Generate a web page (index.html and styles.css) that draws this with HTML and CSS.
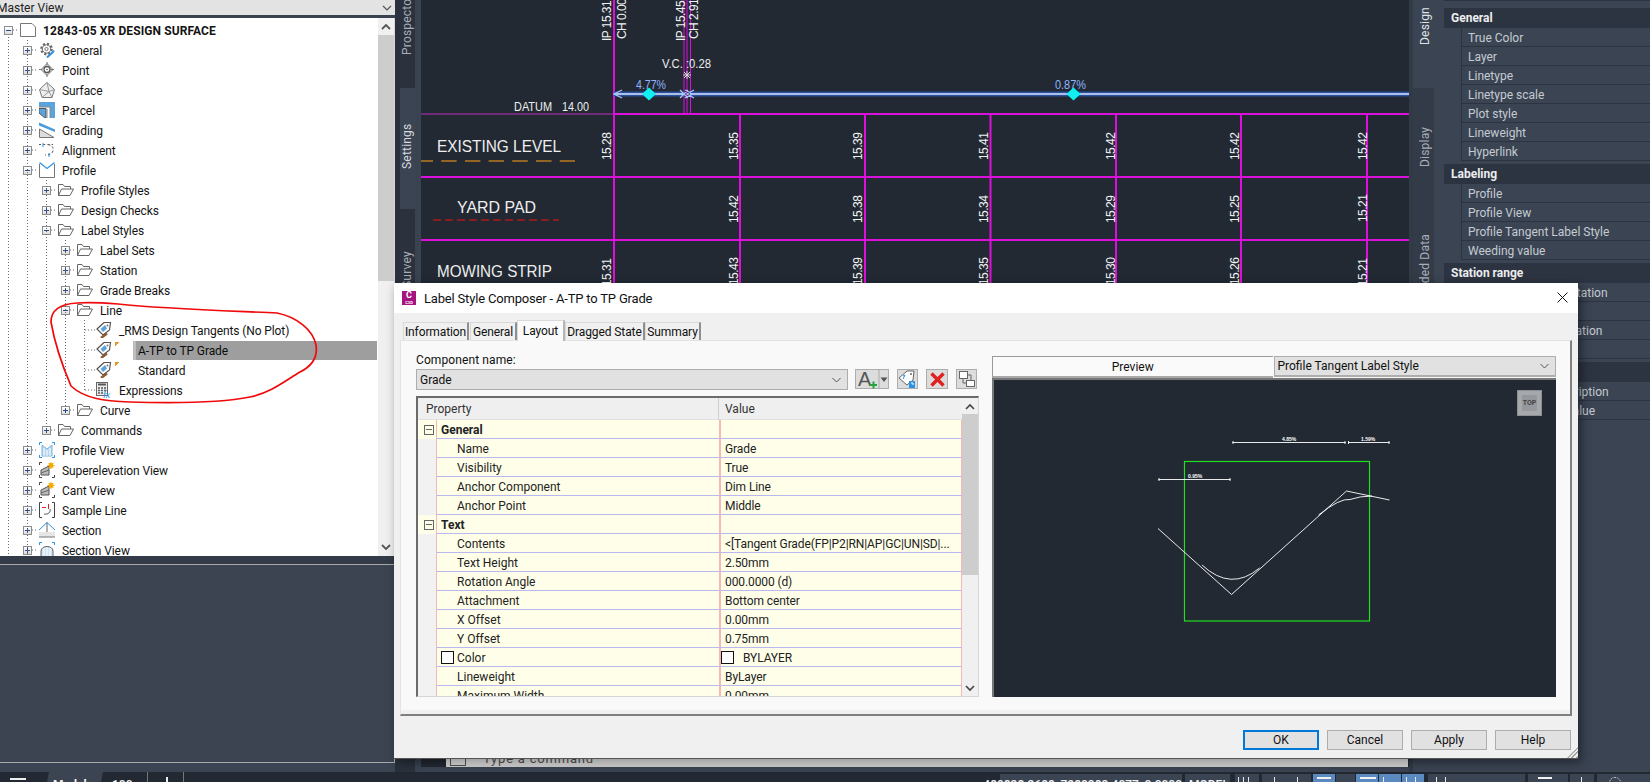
FILE: index.html
```html
<!DOCTYPE html>
<html lang="en">
<head>
<meta charset="utf-8">
<title>Label Style Composer - A-TP to TP Grade</title>
<link rel="stylesheet" href="styles.css">
</head>
<body>
<svg class="defs" width="0" height="0" aria-hidden="true">
  <symbol id="i-doc" viewBox="0 0 16 16"><path d="M.5 1.5H12L15.5 5V14.5H.5Z" fill="#fff" stroke="#777"/></symbol>
  <symbol id="i-gear" viewBox="0 0 16 16"><circle cx="7.5" cy="7" r="5" fill="none" stroke="#666" stroke-width="2.6" stroke-dasharray="2 1.9"/><circle cx="7.5" cy="7" r="4.2" fill="none" stroke="#777"/><circle cx="7.5" cy="7" r="1.6" fill="none" stroke="#777"/><path d="M8 15.5L14.5 9.5M15 8.5L13 11" stroke="#2a93e8" stroke-width="2" fill="none"/></symbol>
  <symbol id="i-point" viewBox="0 0 16 16"><path d="M8 0V3.5M8 11.5V15M0 7.5H3.5M11.5 7.5H15M8 1.5L14 7.5L8 13.5L2 7.5Z" fill="none" stroke="#777"/><circle cx="8" cy="7.5" r="3" fill="#fff" stroke="#555" stroke-width="1.3"/><circle cx="8" cy="7.5" r=".8" fill="#555"/></symbol>
  <symbol id="i-surface" viewBox="0 0 16 16"><path d="M8 .5L15.5 7.5L13 15.5H3L.5 7.5Z" fill="#eee" stroke="#777"/><path d="M.5 7.5L10 9.5L8 .5M10 9.5L13 15.5M10 9.5L3 15.5M10 9.5L15.5 7.5" fill="none" stroke="#999"/></symbol>
  <symbol id="i-parcel" viewBox="0 0 16 16"><path d="M0 0H16V16H11V5H0Z" fill="#5aa3dd"/><path d="M0 6.5H7V16H6L0 11Z" fill="#5aa3dd" stroke="#555"/><path d="M8 16V7M0 5H11V16" fill="none" stroke="#888"/></symbol>
  <symbol id="i-grading" viewBox="0 0 16 16"><path d="M.5 15.5V7L15 15.5Z" fill="#ddd" stroke="#777"/><path d="M0 .5L16 7.5V10L0 3.5Z" fill="#4a9ade"/></symbol>
  <symbol id="i-align" viewBox="0 0 16 16"><path d="M0 2.5H14" stroke="#555" fill="none" stroke-dasharray="2 2.2"/><path d="M9 2.5C13 3 15 6 14 9S10 13 6 13" stroke="#555" fill="none" stroke-dasharray="2.5 2"/><path d="M4 1V5M10 11V15" stroke="#2a93e8"/></symbol>
  <symbol id="i-profile" viewBox="0 0 16 16"><path d="M.5 2V15.5H15.5V2" fill="none" stroke="#777"/><path d="M.5 .5L8 6.5L15.5 .5" fill="none" stroke="#2a93e8" stroke-width="1.2"/></symbol>
  <symbol id="i-folder" viewBox="0 0 16 16"><path d="M.5 13.5V2.5H5L6.5 4.5H12.5V7" fill="#fff" stroke="#666"/><path d="M.5 13.5H12L15.5 7H3.5Z" fill="#fff" stroke="#666"/></symbol>
  <symbol id="i-tag" viewBox="0 0 16 16"><path d="M1 7L8 .5H14.5L13.5 8L7 13Z" fill="#fff" stroke="#555" stroke-width="1.2"/><circle cx="11.5" cy="3.5" r="1" fill="#777"/><path d="M4.5 7L9 3L11 6.5L7 10Z" fill="#5aa3dd"/><path d="M5 16L11 11.5" stroke="#8a5a2b" stroke-width="2.4"/></symbol>
  <symbol id="i-calc" viewBox="0 0 16 16"><rect x=".5" y=".5" width="11" height="13" fill="#eee" stroke="#666"/><path d="M2 2.5H10" stroke="#555" stroke-width="2"/><path d="M2 6H10M2 8.5H10M2 11H8" stroke="#555" stroke-width="1.4" stroke-dasharray="2 1"/><text x="7" y="16" class="fx">fx</text></symbol>
  <symbol id="i-pview" viewBox="0 0 16 16"><path d="M.5 3V.5H3M13 .5H15.5V3M.5 13V15.5H3M13 15.5H15.5V13" fill="none" stroke="#2a93e8"/><path d="M3 3L8 7L13 3V14H3Z" fill="#b9d8ef" stroke="#7fb4dc"/><path d="M5 6V14M8 8V14M11 6V14" stroke="#fff"/></symbol>
  <symbol id="i-super" viewBox="0 0 16 16"><path d="M.5 3V.5H3M.5 13V15.5H3M13 15.5H15.5V13" fill="none" stroke="#444"/><path d="M2 8L10 4V13H2Z" fill="#bbb" stroke="#555"/><path d="M2 11L10 8" stroke="#666"/><circle cx="12" cy="3.5" r="2.4" fill="#f5a800"/><path d="M12 0V7M8.5 3.5H15.5M9.5 1L14.5 6M14.5 1L9.5 6" stroke="#f5a800"/></symbol>
  <symbol id="i-sample" viewBox="0 0 16 16"><path d="M3 .5H.5V15.5H3M13 .5H15.5V15.5H13" fill="none" stroke="#444"/><path d="M3 5.5H7M9.5 2V7" stroke="#d22" fill="none"/><path d="M5 12C9 13 12 10 11 7" fill="none" stroke="#555"/></symbol>
  <symbol id="i-section" viewBox="0 0 16 16"><path d="M0 8L8 .5L16 8" fill="none" stroke="#2a93e8"/><path d="M8 .5V14" stroke="#666"/><path d="M0 10H16V15H0Z" fill="#e6e6e6"/><path d="M0 15H16" stroke="#777"/></symbol>
  <symbol id="i-sview" viewBox="0 0 16 16"><path d="M.5 3V.5H3M13 .5H15.5V3M.5 15.5H1.5M14.5 15.5H15.5" fill="none" stroke="#2a93e8"/><path d="M2 15V9C2 3 14 3 14 9V15Z" fill="#cfe3f2"/><path d="M2 15V9C2 3 14 3 14 9V15" fill="none" stroke="#666"/><path d="M5 6V15M8 5V15M11 6V15" stroke="#fff"/></symbol>
</svg>

<div class="app">
  <div class="main">
    <aside class="left">
      <div class="master"><span class="master-t">Master View</span>
        <svg class="chev" width="10" height="6" viewBox="0 0 10 6"><path d="M1 1L5 5L9 1" fill="none" stroke="#555" stroke-width="1.2"/></svg>
      </div>
      <div class="tree-wrap">
        <div class="tree">
          <div class="row l0"><span class="box minus"></span><svg class="ic"><use href="#i-doc"/></svg><span class="t root">12843-05 XR DESIGN SURFACE</span></div>
          <div class="row l1"><span class="box plus"></span><svg class="ic"><use href="#i-gear"/></svg><span class="t">General</span></div>
          <div class="row l1"><span class="box plus"></span><svg class="ic"><use href="#i-point"/></svg><span class="t">Point</span></div>
          <div class="row l1"><span class="box plus"></span><svg class="ic"><use href="#i-surface"/></svg><span class="t">Surface</span></div>
          <div class="row l1"><span class="box plus"></span><svg class="ic"><use href="#i-parcel"/></svg><span class="t">Parcel</span></div>
          <div class="row l1"><span class="box plus"></span><svg class="ic"><use href="#i-grading"/></svg><span class="t">Grading</span></div>
          <div class="row l1"><span class="box plus"></span><svg class="ic"><use href="#i-align"/></svg><span class="t">Alignment</span></div>
          <div class="row l1"><span class="box minus"></span><svg class="ic"><use href="#i-profile"/></svg><span class="t">Profile</span></div>
          <div class="row l2"><span class="box plus"></span><svg class="ic"><use href="#i-folder"/></svg><span class="t">Profile Styles</span></div>
          <div class="row l2"><span class="box plus"></span><svg class="ic"><use href="#i-folder"/></svg><span class="t">Design Checks</span></div>
          <div class="row l2"><span class="box minus"></span><svg class="ic"><use href="#i-folder"/></svg><span class="t">Label Styles</span></div>
          <div class="row l3"><span class="box plus"></span><svg class="ic"><use href="#i-folder"/></svg><span class="t">Label Sets</span></div>
          <div class="row l3"><span class="box plus"></span><svg class="ic"><use href="#i-folder"/></svg><span class="t">Station</span></div>
          <div class="row l3"><span class="box plus"></span><svg class="ic"><use href="#i-folder"/></svg><span class="t">Grade Breaks</span></div>
          <div class="row l3"><span class="box minus"></span><svg class="ic"><use href="#i-folder"/></svg><span class="t">Line</span></div>
          <div class="row l4"><span class="box none"></span><svg class="ic"><use href="#i-tag"/></svg><span class="t">_RMS Design Tangents (No Plot)</span></div>
          <div class="row l4"><span class="box none"></span><svg class="ic"><use href="#i-tag"/></svg><span class="mark"></span><span class="t sel">A-TP to TP Grade</span></div>
          <div class="row l4"><span class="box none"></span><svg class="ic"><use href="#i-tag"/></svg><span class="mark"></span><span class="t unsel">Standard</span></div>
          <div class="row l4"><span class="box none"></span><svg class="ic"><use href="#i-calc"/></svg><span class="t">Expressions</span></div>
          <div class="row l3"><span class="box plus"></span><svg class="ic"><use href="#i-folder"/></svg><span class="t">Curve</span></div>
          <div class="row l2"><span class="box plus"></span><svg class="ic"><use href="#i-folder"/></svg><span class="t">Commands</span></div>
          <div class="row l1"><span class="box plus"></span><svg class="ic"><use href="#i-pview"/></svg><span class="t">Profile View</span></div>
          <div class="row l1"><span class="box plus"></span><svg class="ic"><use href="#i-super"/></svg><span class="t">Superelevation View</span></div>
          <div class="row l1"><span class="box plus"></span><svg class="ic"><use href="#i-super"/></svg><span class="t">Cant View</span></div>
          <div class="row l1"><span class="box plus"></span><svg class="ic"><use href="#i-sample"/></svg><span class="t">Sample Line</span></div>
          <div class="row l1"><span class="box plus"></span><svg class="ic"><use href="#i-section"/></svg><span class="t">Section</span></div>
          <div class="row l1"><span class="box plus"></span><svg class="ic"><use href="#i-sview"/></svg><span class="t">Section View</span></div>
          <svg class="tree-over" width="378" height="538" viewBox="0 18 378 538">
            <path class="dots" d="M8.5 37V556M27.5 40V556M46.5 180V430M65.5 240V410M84.5 320V390M13 30H19M32 50H38M32 70H38M32 90H38M32 110H38M32 130H38M32 150H38M32 170H38M51 190H57M51 210H57M51 230H57M70 250H76M70 270H76M70 290H76M70 310H76M85 330H96M85 350H96M85 370H96M85 390H96M70 410H76M51 430H57M32 450H38M32 470H38M32 490H38M32 510H38M32 530H38M32 550H38"/>
            <path class="scribble" d="M118 304C165 309 235 311 277 313C297 317 313 330 316 345C318 358 312 366 300 372C285 381 270 393 250 397C215 404 165 403 130 402C105 401 85 399 71 386C62 365 55 345 51 322C51 310 60 304 77 303C90 302 105 303 118 304Z"/>
          </svg>
        </div>
        <div class="vscroll">
          <div class="vs-btn"><svg width="10" height="7" viewBox="0 0 10 7"><path d="M1 6L5 2L9 6" fill="none" stroke="#555" stroke-width="1.8"/></svg></div>
          <div class="vs-thumb"></div>
          <div class="vs-track"></div>
          <div class="vs-btn"><svg width="10" height="7" viewBox="0 0 10 7"><path d="M1 1L5 5L9 1" fill="none" stroke="#555" stroke-width="1.8"/></svg></div>
        </div>
      </div>
      <div class="left-dark"></div>
    </aside>

    <div class="ltabs">
      <div class="vtab vt-a">Prospector</div>
      <div class="vtab vt-b vt-on">Settings</div>
      <div class="vtab vt-c">Survey</div>
    </div>

    <section class="canvas">
      <svg class="cad" width="988" height="767" viewBox="421 0 988 767">
        <g class="mag">
          <path class="mag-dim" d="M421 114H614"/>
          <path d="M614 114H1409M421 177H1409M421 240H1409M614 0V283M740 114V283M865 114V283M990.500 114V283M1116 114V283M1241 114V283M1367 114V283"/>
          <path class="thin" d="M684 0V113M687 0V113M690.500 0V113"/>
        </g>
        <g class="num">
          <text transform="translate(611 41) rotate(-90)">IP 15.31</text>
          <text transform="translate(626 39) rotate(-90)">CH 0.00</text>
          <text transform="translate(685 41) rotate(-90)">IP 15.45</text>
          <text transform="translate(698 39) rotate(-90)">CH 2.91</text>
          <text transform="translate(611 160) rotate(-90)">15.28</text>
          <text transform="translate(738 160) rotate(-90)">15.35</text>
          <text transform="translate(861.500 160) rotate(-90)">15.39</text>
          <text transform="translate(988 160) rotate(-90)">15.41</text>
          <text transform="translate(1114.500 160) rotate(-90)">15.42</text>
          <text transform="translate(1239 160) rotate(-90)">15.42</text>
          <text transform="translate(1366.500 160) rotate(-90)">15.42</text>
          <text transform="translate(738 223) rotate(-90)">15.42</text>
          <text transform="translate(861.500 223) rotate(-90)">15.38</text>
          <text transform="translate(988 223) rotate(-90)">15.34</text>
          <text transform="translate(1114.500 223) rotate(-90)">15.29</text>
          <text transform="translate(1239 223) rotate(-90)">15.25</text>
          <text transform="translate(1366.500 222) rotate(-90)">15.21</text>
          <text transform="translate(611 286) rotate(-90)">15.31</text>
          <text transform="translate(738 285) rotate(-90)">15.43</text>
          <text transform="translate(861.500 285) rotate(-90)">15.39</text>
          <text transform="translate(988 285) rotate(-90)">15.35</text>
          <text transform="translate(1114.500 285) rotate(-90)">15.30</text>
          <text transform="translate(1239 285) rotate(-90)">15.26</text>
          <text transform="translate(1366.500 286) rotate(-90)">15.21</text>
        </g>
        <g class="lab">
          <text class="big" x="437" y="152" textLength="124" lengthAdjust="spacingAndGlyphs">EXISTING LEVEL</text>
          <text class="big" x="457" y="213" textLength="79" lengthAdjust="spacingAndGlyphs">YARD PAD</text>
          <text class="big" x="437" y="277" textLength="115" lengthAdjust="spacingAndGlyphs">MOWING STRIP</text>
          <text class="sm" x="514" y="111" textLength="38" lengthAdjust="spacingAndGlyphs">DATUM</text>
          <text class="sm" x="562" y="111" textLength="27" lengthAdjust="spacingAndGlyphs">14.00</text>
          <text class="sm" x="662" y="68" textLength="49" lengthAdjust="spacingAndGlyphs">V.C. :0.28</text>
          <text class="grade" x="636" y="89" textLength="30" lengthAdjust="spacingAndGlyphs">4.77%</text>
          <text class="grade" x="1055" y="89" textLength="31" lengthAdjust="spacingAndGlyphs">0.87%</text>
        </g>
        <path class="dash-o" d="M421 161H575"/>
        <path class="dash-r" d="M433 220H559"/>
        <path class="star" d="M684 72L690 78M690 72L684 78M687 71V79M683 75H691"/>
        <path class="glow" d="M614 94H684M690 94H1409"/>
        <path class="core" d="M614 94H684M690 94H1409"/>
        <path class="arrow" d="M622 90L614 94L622 98M680 90L688 98M680 98L688 90M685 90L693 94L685 98M694 90L687 94L694 98"/>
        <path class="dia" d="M649 87.500L656 94L649 100.500L642 94Z"/>
        <path class="dia" d="M1073.500 87.500L1080.500 94L1073.500 100.500L1066.500 94Z"/>
      </svg>
      <div class="cmd"><span class="cmd-box"></span><span class="cmd-t">Type a command</span></div>
    </section>

    <div class="rdock">
      <div class="rtabs">
        <div class="vtab rt-a rt-on">Design</div>
        <div class="vtab rt-b">Display</div>
        <div class="vtab rt-c">Extended Data</div>
      </div>
      <div class="props">
        <div class="ph ph-first">General</div>
        <div class="pr">True Color</div><div class="pr">Layer</div><div class="pr">Linetype</div><div class="pr">Linetype scale</div><div class="pr">Plot style</div><div class="pr">Lineweight</div><div class="pr">Hyperlink</div>
        <div class="ph">Labeling</div>
        <div class="pr">Profile</div><div class="pr">Profile View</div><div class="pr">Profile Tangent Label Style</div><div class="pr">Weeding value</div>
        <div class="ph">Station range</div>
        <div class="pr">Tangent label start station</div><div class="pr">Start</div><div class="pr">Tangent label end station</div><div class="pr">End</div>
        <div class="ph">Data</div>
        <div class="pr">Profile tangent description</div><div class="pr">Profile grade label value</div>
      </div>
    </div>
  </div>

  <footer class="status">
    <span class="burger"></span>
    <span class="st-tab">Model</span>
    <span class="st-txt st-100">100</span>
    <span class="st-sl"></span><span class="st-bar"></span><span class="st-sl"></span>
    <span class="st-spacer"></span>
    <span class="sb sb-coord">489838.3688, 7288383.4077, 0.0000</span>
    <span class="sb sb-model">MODEL</span>
    <span class="sb sb-grid"><i class="tick"></i><i class="tick"></i><i class="tick"></i></span>
    <span class="sb sb-snap"><i class="tick"></i><i class="tick"></i></span>
    <span class="sb sb-on sb-a"><i class="hbar"></i></span>
    <span class="sb sb-gap"></span>
    <span class="sb sb-on sb-a"><i class="hbar wide"></i></span>
    <span class="sb sb-on sb-a"><i class="tick"></i></span>
    <span class="sb sb-on sb-a"><i class="tick"></i><i class="tick"></i></span>
    <span class="sb sb-scale"><i class="tick"></i><i class="tick"></i><span class="st-txt">1:100</span></span>
    <span class="sb sb-gear"><i class="hbar"></i></span>
    <span class="sb sb-plus"><i class="tick"></i></span>
    <span class="sb sb-iso"><span class="ring"></span><span class="st-txt">1:1</span></span>
  </footer>

  <div class="dialog">
    <header class="d-title">
      <span class="appicon"><span class="ai-c">C</span><span class="ai-3">C3D</span></span>
      <span class="d-name">Label Style Composer - A-TP to TP Grade</span>
      <svg class="d-x" width="11" height="11" viewBox="0 0 11 11"><path d="M.5 .5L10.500 10.500M10.500 .5L.5 10.500" stroke="#111" fill="none"/></svg>
    </header>
    <div class="d-tabs">
      <span class="tb tb-i">Information</span>
      <span class="tb tb-g">General</span>
      <span class="tb tb-l tb-on">Layout</span>
      <span class="tb tb-d">Dragged State</span>
      <span class="tb tb-s">Summary</span>
    </div>
    <div class="page">
      <div class="pcol">
        <div class="cname">Component name:</div>
        <div class="ctools">
          <div class="combo combo-l"><span>Grade</span>
            <svg width="9" height="6" viewBox="0 0 9 6"><path d="M.5 1L4.500 5L8.500 1" fill="none" stroke="#555"/></svg>
          </div>
          <button class="tbtn tb-a"><svg width="32" height="19" viewBox="0 0 32 19"><text x="2" y="16" class="bigA">A</text><path d="M14 15H21M17.500 11.500V18.500" stroke="#22a53a" stroke-width="2"/><path d="M23 0V19" stroke="#aaa"/><path d="M24.500 7.500H31.500L28 12Z" fill="#555"/></svg></button>
          <button class="tbtn tb-b"><svg width="19" height="19" viewBox="0 0 19 19"><path d="M1 8L9 1H16L15 10L9 15Z" fill="#fff" stroke="#666"/><circle cx="13" cy="4" r="1" fill="#666"/><path d="M5 9L7 5M7 5L5 6" stroke="#2a93e8" fill="none"/><path d="M11 11H17V18H11Z" fill="#2a93e8"/><path d="M13 13H15V15" stroke="#fff" fill="none"/></svg></button>
          <button class="tbtn tb-c"><svg width="17" height="17" viewBox="0 0 17 17"><path d="M2.500 2.500L14.500 14.500M14.500 2.500L2.500 14.500" stroke="#e02020" stroke-width="3.400"/></svg></button>
          <button class="tbtn tb-b"><svg width="18" height="18" viewBox="0 0 18 18"><rect x="1.500" y="1.500" width="8" height="7" fill="#fff" stroke="#666"/><rect x="8.500" y="10.500" width="8" height="6" fill="#fff" stroke="#666"/><path d="M5 8.500V13H8.500M9.500 5H13V10" fill="none" stroke="#666"/></svg></button>
        </div>
        <div class="pgrid">
          <div class="pg-main">
            <div class="pg-head"><span class="ph-p">Property</span><span class="ph-v">Value</span></div>
            <div class="gr gr-g"><span class="gut"><i class="gbox"></i></span><span class="gn">General</span><span class="gv"></span></div>
            <div class="gr"><span class="gut"></span><span class="gn">Name</span><span class="gv">Grade</span></div>
            <div class="gr"><span class="gut"></span><span class="gn">Visibility</span><span class="gv">True</span></div>
            <div class="gr"><span class="gut"></span><span class="gn">Anchor Component</span><span class="gv">Dim Line</span></div>
            <div class="gr"><span class="gut"></span><span class="gn">Anchor Point</span><span class="gv">Middle</span></div>
            <div class="gr gr-g"><span class="gut"><i class="gbox"></i></span><span class="gn">Text</span><span class="gv"></span></div>
            <div class="gr"><span class="gut"></span><span class="gn">Contents</span><span class="gv">&lt;[Tangent Grade(FP|P2|RN|AP|GC|UN|SD|...</span></div>
            <div class="gr"><span class="gut"></span><span class="gn">Text Height</span><span class="gv">2.50mm</span></div>
            <div class="gr"><span class="gut"></span><span class="gn">Rotation Angle</span><span class="gv">000.0000 (d)</span></div>
            <div class="gr"><span class="gut"></span><span class="gn">Attachment</span><span class="gv">Bottom center</span></div>
            <div class="gr"><span class="gut"></span><span class="gn">X Offset</span><span class="gv">0.00mm</span></div>
            <div class="gr"><span class="gut"></span><span class="gn">Y Offset</span><span class="gv">0.75mm</span></div>
            <div class="gr gr-c"><span class="gut"></span><span class="gn"><i class="sw sw-n"></i>Color</span><span class="gv"><i class="sw sw-v"></i>BYLAYER</span></div>
            <div class="gr"><span class="gut"></span><span class="gn">Lineweight</span><span class="gv">ByLayer</span></div>
            <div class="gr"><span class="gut"></span><span class="gn">Maximum Width</span><span class="gv">0.00mm</span></div>
          </div>
          <div class="pg-scroll">
            <div class="pgs-btn"><svg width="10" height="7" viewBox="0 0 10 7"><path d="M1 6L5 2L9 6" fill="none" stroke="#444" stroke-width="1.600"/></svg></div>
            <div class="pgs-thumb"></div>
            <div class="pgs-track"></div>
            <div class="pgs-btn"><svg width="10" height="7" viewBox="0 0 10 7"><path d="M1 1L5 5L9 1" fill="none" stroke="#444" stroke-width="1.600"/></svg></div>
          </div>
        </div>
      </div>
      <div class="pcol pcol-r">
        <div class="prev-head">
          <span class="prev-tab">Preview</span>
          <div class="combo combo-r"><span>Profile Tangent Label Style</span>
            <svg width="9" height="6" viewBox="0 0 9 6"><path d="M.5 1L4.500 5L8.500 1" fill="none" stroke="#555"/></svg>
          </div>
        </div>
        <div class="preview">
          <svg class="prev-svg" width="562" height="317" viewBox="994 380 562 317">
            <rect x="1184.500" y="461.500" width="185" height="159.500" fill="none" stroke="#20e020" stroke-width="1.200"/>
            <g fill="none" stroke="#fff" stroke-width=".9">
              <path d="M1158 528.500L1231.500 594.500L1346.500 491L1389.500 500"/>
              <path d="M1202 565Q1231 592 1259.500 568"/>
              <path d="M1318.500 515Q1340 498 1350 499.500Q1360 496 1372 496"/>
              <path d="M1232.500 442.500H1345.500M1348 442.500H1389.500M1158.500 479.500H1230.500"/>
              <path d="M1233 441V444M1345 441V444M1348.500 441V444M1389 441V444M1159 478V481M1230 478V481"/>
            </g>
            <g class="tiny">
              <text x="1282" y="441">4.85%</text>
              <text x="1361" y="441">1.59%</text>
              <text x="1188" y="478">0.95%</text>
            </g>
          </svg>
          <div class="topbtn"><span>TOP</span></div>
        </div>
      </div>
    </div>
    <div class="d-foot">
      <button class="btn btn-ok">OK</button>
      <button class="btn">Cancel</button>
      <button class="btn">Apply</button>
      <button class="btn">Help</button>
    </div>
    <span class="grip"></span>
  </div>
</div>
</body>
</html>
```
FILE: styles.css
```css
* { box-sizing: border-box; }
html, body { margin: 0; padding: 0; height: 100%; overflow: hidden; background: #222933; }
body { font: 12px/1 Roboto, "Liberation Sans", sans-serif; color: #111; }
.defs { position: absolute; }
.fx { font: italic 10px "Liberation Serif", serif; fill: #1f8fe8; }

.app { position: relative; width: 1650px; height: 782px; display: flex; flex-direction: column; overflow: hidden; }
.main { height: 772px; display: flex; background: #3b4453; padding-bottom: 0; }

/* left palette */
.left { width: 395px; display: flex; flex-direction: column; background: #3b4453; }
.master { height: 15px; background: #e3e3e3; display: flex; align-items: center; justify-content: space-between; padding-right: 3px; overflow: hidden; }
.master-t { margin-left: -3px; font-size: 12px; color: #222; }
.tree-wrap { margin-top: 3px; height: 538px; display: flex; background: #fff; border-right: 1px solid #d8d8d8; box-shadow: 0 -3px 0 #3a4250; }
.tree { position: relative; width: 378px; height: 538px; padding-top: 2px; overflow: hidden; background: #fff; }
.row { height: 20px; display: flex; align-items: center; font-size: 12px; white-space: nowrap; }
.l0 { padding-left: 4px; } .l1 { padding-left: 23px; } .l2 { padding-left: 42px; } .l3 { padding-left: 61px; } .l4 { padding-left: 80px; }
.box { width: 9px; height: 9px; flex: none; position: relative; border: 1px solid #8d8d8d; background: linear-gradient(#fff, #dcdcdc); z-index: 2; }
.box.none { border: 0; background: none; }
.box.plus::before, .box.minus::before { content: ""; position: absolute; left: 1px; right: 1px; top: 3px; height: 1px; background: #2b4a8e; }
.box.plus::after { content: ""; position: absolute; top: 1px; bottom: 1px; left: 3px; width: 1px; background: #2b4a8e; }
.ic { width: 16px; height: 16px; flex: none; margin-left: 7px; z-index: 2; }
.t { margin-left: 7px; padding-top: 2px; color: #141414; letter-spacing: -.1px; position: relative; z-index: 1; }
.root { font-weight: 700; letter-spacing: .1px; }
.mark { width: 5px; height: 5px; flex: none; margin: -12px 0 0 3px; background: linear-gradient(135deg, #e39a22 50%, transparent 50%); }
.t.sel, .t.unsel { flex: 1; height: 19px; padding-top: 0; line-height: 21px; margin-left: 13px; padding-left: 5px; }
.t.sel { margin-right: 1px; background: #9e9e9e; box-shadow: inset 3px 0 0 #bdbdbd; color: #0c0c0c; }
.tree-over { position: absolute; left: 0; top: 0; pointer-events: none; z-index: 3; }
.dots { fill: none; stroke: #6c6c6c; stroke-width: 1; stroke-dasharray: 1 2; }
.scribble { fill: none; stroke: #f00a0a; stroke-width: 1.7; }
.vscroll { width: 16px; display: flex; flex-direction: column; background: #f0f0f0; }
.vs-btn { height: 17px; display: flex; align-items: center; justify-content: center; background: #f0f0f0; }
.vs-thumb { height: 246px; background: #cdcdcd; }
.vs-track { flex: 1; }
.left-dark { flex: 1; margin-top: 8px; margin-bottom: 9px; border-top: 1px solid #a9a9a9; border-bottom: 1px solid #a9a9a9; border-right: 1px solid #a9a9a9; background: #3c4452; box-shadow: 0 -8px 0 #333b48; }

/* vertical tabs */
.ltabs { width: 26px; background: #2a313c; padding-left: 5px; border-right: 6px solid #394352; display: flex; flex-direction: column; }
.vtab { writing-mode: vertical-rl; transform: rotate(180deg); font-size: 12px; letter-spacing: .2px; white-space: nowrap; color: #a8aeb6; text-align: left; line-height: 15px; overflow: visible; flex: none; }
.vt-a { height: 88px; padding-top: 33px; background: #2b323e; }
.vt-b { height: 121px; padding-top: 40px; background: #3b4453; color: #d6dade; }
.vt-c { height: 121px; padding-top: 42px; background: #2b323e; }

/* drawing */
.canvas { position: relative; width: 988px; height: 767px; background: #222933; flex: none; }
.cad { display: block; }
.mag path { fill: none; stroke: #dc10dc; stroke-width: 2; }
.mag .mag-dim { stroke: #6f2a78; }
.mag .thin { stroke-width: 1; }
.num text { font: 12px "Liberation Sans", sans-serif; letter-spacing: -.55px; fill: #f2f2f2; }
.lab text { font-family: "Liberation Sans", sans-serif; fill: #eee; }
.lab .big { font-size: 17px; }
.lab .sm { font-size: 12px; }
.lab .grade { font-size: 13px; fill: #8fb4ff; }
.dash-o { stroke: #b97a22; stroke-width: 1.4; fill: none; stroke-dasharray: 15.5 8.2; stroke-dashoffset: 3.5; }
.dash-r { stroke: #f01010; stroke-width: 1.2; fill: none; stroke-dasharray: 8 4; }
.star { stroke: #d8d8d8; stroke-width: 1; fill: none; }
.glow { stroke: #2a509e; stroke-width: 5; fill: none; }
.core { stroke: #d6e4ff; stroke-width: 1.6; fill: none; }
.arrow { stroke: #a7c4ff; stroke-width: 1.3; fill: none; }
.dia { fill: #10f0f0; }
.cmd { position: absolute; left: 25px; right: 1px; top: 740px; height: 27px; padding-top: 12px; display: flex; align-items: flex-start; background: linear-gradient(#fff 60%, #d0d0d0); color: #555; }
.cmd-box { width: 16px; height: 14px; margin-left: 4px; border: 1px solid #555; }
.cmd-t { margin-left: 17px; font-size: 13px; letter-spacing: .8px; }

/* right palette */
.rdock { flex: 1; display: flex; background: #3b4453; border-left: 4px solid #323a46; }
.rtabs { width: 25px; display: flex; flex-direction: column; flex: none; }
.rt-a, .rt-b, .rt-c { width: 21px; padding-right: 5px; }
.rt-a { height: 88px; padding-top: 43px; color: #dfe3e6; background: #3b4453; }
.rt-b { height: 121px; padding-top: 42px; background: #333b48; }
.rt-c { height: 122px; padding-top: 17px; background: #333b48; }
.props { flex: 1; margin-left: 6px; color: #c5cbd2; font-size: 12px; border-top: 1px solid #2d3441; }
.ph { height: 20px; margin-top: 3px; padding-left: 7px; line-height: 20px; font-weight: 700; color: #ecedee; background: #2d3441; }
.ph-first { margin-top: 7px; }
.pr { height: 19px; line-height: 21px; margin-left: 17px; padding-left: 6px; border-left: 1px solid #2d3441; border-bottom: 1px solid #2d3441; white-space: nowrap; overflow: hidden; }

/* status bar */
.status { height: 10px; display: flex; background: #222933; color: #f2f2f2; overflow: hidden; font-weight: 500; }
.burger { width: 16px; height: 2px; margin: 6px 0 0 10px; background: #eee; flex: none; }
.st-tab { width: 58px; height: 20px; margin-left: 19px; padding: 7px 0 0 8px; background: #3c4452; font-weight: 700; clip-path: polygon(4px 0, 100% 0, calc(100% - 4px) 100%, 0 100%); flex: none; }
.st-txt { display: inline-block; padding-top: 7px; }
.st-100 { margin-left: 9px; }
.st-sl { width: 1px; height: 10px; margin-left: 15px; background: #777; flex: none; }
.st-bar { width: 2px; height: 10px; margin: 5px 0 0 18px; background: #eee; flex: none; }
.st-spacer { flex: 1; }
.sb { height: 20px; margin-top: 2px; flex: none; background: #3b4453; display: flex; gap: 8px; padding-left: 8px; white-space: nowrap; }
.sb-coord { width: 182px; margin-right: 3px; padding: 5px 0 0 0; justify-content: flex-end; }
.sb-model { width: 45px; margin-right: 5px; padding: 5px 0 0 4px; }
.sb-grid { width: 24px; margin-right: 3px; gap: 4px; padding-left: 3px; }
.sb-snap { width: 49px; margin-right: 2px; gap: 22px; padding-left: 12px; }
.sb-on { background: #5b8ac0; }
.sb-a { width: 22px; margin-right: 1px; padding-left: 4px; }
.sb-gap { width: 19px; margin-right: 1px; }
.sb-scale { width: 97px; margin: 2px 3px 0 3px; }
.sb-gear { width: 40px; margin-right: 2px; padding-left: 10px; }
.sb-plus { width: 24px; margin-right: 3px; padding-left: 11px; }
.sb-iso { width: 53px; padding-left: 12px; }
.tick { display: block; width: 1px; height: 12px; margin-top: 3px; background: #e8e8e8; }
.hbar { display: block; width: 14px; height: 2px; margin-top: 3px; background: #f2f2f2; }
.hbar.wide { width: 16px; }
.ring { width: 12px; height: 12px; margin-top: 3px; border: 1px dotted #e8e8e8; border-radius: 50%; }

/* dialog */
.dialog { position: absolute; left: 394px; top: 283px; width: 1184px; height: 476px; background: #f0f0f0; display: flex; flex-direction: column; box-shadow: 3px 3px 10px rgba(0,0,0,.45); border-bottom: 1px solid #555; }
.d-title { height: 30px; flex: none; background: #fff; display: flex; align-items: center; padding-left: 8px; position: relative; }
.appicon { width: 14px; height: 14px; background: #a5147f; display: flex; flex-direction: column; align-items: center; color: #fff; font-weight: 700; overflow: hidden; }
.ai-c { font-size: 9px; line-height: 9px; }
.ai-3 { font-size: 4px; line-height: 5px; }
.d-name { margin-left: 8px; font-size: 13px; letter-spacing: -.18px; color: #111; }
.d-x { position: absolute; left: 1163px; top: 9px; }
.d-tabs { height: 27px; padding: 9px 0 0 9px; display: flex; align-items: stretch; flex: none; position: relative; z-index: 2; }
.tb { display: flex; align-items: center; justify-content: center; height: 18px; background: #f0f0f0; border: 1px solid #d9d9d9; border-right: 2px solid #8f8f8f; border-bottom: 0; color: #111; font-size: 12px; letter-spacing: -.1px; }
.tb-i { width: 66px; } .tb-g { width: 47px; margin-left: 1px; } .tb-l { width: 48px; } .tb-d { width: 80px; } .tb-s { width: 56px; }
.tb-on { height: 21px; margin-top: -2px; background: #fafafa; border-right-color: #b5b5b5; }
.page { height: 376px; margin: 0 6px; flex: none; padding: 13px 14px 0 15px; display: flex; gap: 13px; background: #f9f9f9; border: 1px solid #e4e4e4; border-right: 2px solid #808080; border-bottom: 2px solid #808080; box-shadow: inset 0 -4px 0 #f0f0f0; }
.pcol { width: 563px; flex: none; }
.pcol-r { width: 564px; padding-top: 2px; }
.cname { height: 15px; color: #111; font-size: 12px; letter-spacing: .1px; }
.ctools { height: 21px; display: flex; }
.combo { height: 21px; display: flex; align-items: center; justify-content: space-between; padding: 0 6px 0 3px; background: #e1e1e1; border: 1px solid #adadad; color: #111; }
.combo-l { width: 432px; }
.tbtn { padding: 0; margin: 0 0 0 8px; height: 20px; display: flex; align-items: center; justify-content: center; background: #dcdcdc; border: 1px solid #adadad; }
.tb-a { width: 34px; margin-left: 7px; }
.tb-b { width: 21px; margin-left: 8px; }
.tb-c { width: 22px; margin-left: 8px; }
.bigA { font: 20px "Liberation Sans", sans-serif; fill: #555; }
.pgrid { height: 301px; margin-top: 6px; display: flex; overflow: hidden; border: 1px solid #d6d6d6; border-top: 2px solid #6b6b6b; border-left: 2px solid #6b6b6b; background: #f2f2f2; }
.pg-main { width: 544px; flex: none; }
.pg-head { height: 22px; display: grid; grid-template-columns: 301px 243px; align-items: center; background: #efefef; border-bottom: 1px solid #e0e0e0; color: #333; }
.ph-p { padding-left: 8px; border-right: 1px solid #cfcfcf; height: 22px; line-height: 22px; }
.ph-v { padding-left: 6px; }
.gr { height: 19px; display: grid; grid-template-columns: 18px 283px 243px; color: #222; }
.gut { background: #f2f2f2; display: flex; align-items: center; justify-content: center; }
.gn, .gv { position: relative; background: #ffffe9; border-bottom: 1px solid #b9b9f2; line-height: 21px; white-space: nowrap; overflow: hidden; }
.gn { padding-left: 20px; border-left: 1px solid #f4b8b8; }
.gv { padding-left: 4px; border-left: 2px solid #f4b8b8; border-right: 1px solid #f4b8b8; letter-spacing: -.1px; }
.gr-g .gn { padding-left: 4px; font-weight: 700; }
.gr-g .gut { background: #ffffe9; }
.gbox { display: block; width: 10px; height: 10px; margin-left: 4px; border: 1px solid #666; background: linear-gradient(#666,#666) center/6px 1px no-repeat; }
.sw { position: absolute; top: 3px; width: 13px; height: 13px; background: #fff; border: 1px solid #111; }
.sw-n { left: 4px; }
.sw-v { left: 0; }
.gr-c .gv { padding-left: 22px; }
.pg-scroll { width: 16px; flex: none; display: flex; flex-direction: column; background: #f0f0f0; }
.pgs-btn { height: 16px; display: flex; align-items: center; justify-content: center; }
.pgs-thumb { height: 161px; background: #cdcdcd; }
.pgs-track { flex: 1; }
.prev-head { height: 22px; display: flex; }
.prev-tab { width: 281px; height: 22px; display: flex; align-items: center; justify-content: center; background: #fafafa; border-top: 1px solid #9a9a9a; border-left: 1px solid #9a9a9a; border-bottom: 2px solid #a8a8a8; color: #111; }
.combo-r { width: 283px; margin-left: 1px; padding-left: 3px; border-bottom-width: 2px; }
.preview { position: relative; height: 319px; background: #222933; border-top: 2px solid #777; border-left: 2px solid #777; }
.prev-svg { display: block; }
.tiny text { font: 700 5px "Liberation Sans", sans-serif; fill: #fff; }
.topbtn { position: absolute; left: 523px; top: 10px; width: 25px; height: 26px; padding: 4px; background: #a6a8ab; border: 1px solid #8b8e92; }
.topbtn span { display: flex; width: 100%; height: 100%; align-items: center; justify-content: center; background: #95989d; font-size: 7px; font-weight: 700; color: #444; }
.d-foot { flex: 1; display: flex; justify-content: flex-end; gap: 8px; padding: 14px 7px 0 0; }
.btn { width: 76px; height: 20px; padding: 0; font: 12px Roboto, sans-serif; color: #111; background: #e1e1e1; border: 1px solid #adadad; }
.btn-ok { border: 2px solid #0078d7; }
.grip { position: absolute; right: 0; bottom: 0; width: 11px; height: 11px; background: repeating-linear-gradient(135deg, #f0f0f0 0 1.5px, #a0a0a0 1.5px 3px); clip-path: polygon(100% 0, 100% 100%, 0 100%); }
```
